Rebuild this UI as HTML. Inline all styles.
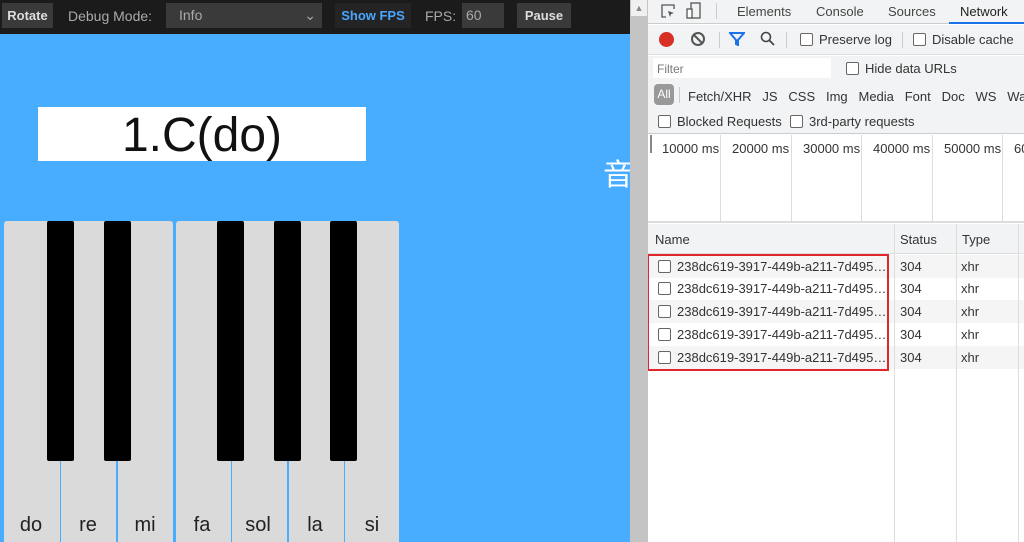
<!DOCTYPE html>
<html><head><meta charset="utf-8"><style>
*{box-sizing:border-box;margin:0;padding:0}
html,body{width:1024px;height:542px;overflow:hidden}
body{position:relative;font-family:"Liberation Sans",sans-serif;background:#fff}
.abs{position:absolute}
#page{left:0;top:0;width:630px;height:542px;background:#49adff;overflow:hidden}
#bar{left:0;top:0;width:630px;height:34px;background:#1b1b1b;color:#aaa;font-size:14px}
.btn{position:absolute;top:3px;height:25px;background:#3a3a3a;color:#ddd;font-weight:bold;font-size:13px;line-height:25px;text-align:center}
.wk{position:absolute;top:221px;height:321px;background:#dadada;border-radius:3px 3px 0 0}
.bk{position:absolute;top:221px;width:27px;height:240px;background:#000;border-radius:2px}
.lbl{position:absolute;top:514px;font-size:20px;color:#222;width:56px;text-align:center}
#dev{left:648px;top:0;width:376px;height:542px;background:#fff;font-family:"Liberation Sans",sans-serif;font-size:13px;color:#333;overflow:hidden}
.cb{display:inline-block;width:13px;height:13px;border:1px solid #666;border-radius:2px;vertical-align:-2px;margin-right:6px;background:#fff}
.row{position:absolute;left:0;width:376px;height:23px;line-height:23px;white-space:nowrap}
</style></head><body>
<div id="page" class="abs">
<div id="bar" class="abs">
 <div class="btn" style="left:2px;width:51px">Rotate</div>
 <span class="abs" style="left:68px;top:8px">Debug Mode:</span>
 <div class="abs" style="left:166px;top:3px;width:156px;height:25px;background:#3a3a3a;color:#aaa;line-height:25px;padding-left:13px">Info<span class="abs" style="right:6px;top:0">⌄</span></div>
 <div class="btn" style="left:335px;width:76px;background:#242424;color:#49a6ff">Show FPS</div>
 <span class="abs" style="left:425px;top:8px">FPS:</span>
 <div class="abs" style="left:462px;top:3px;width:42px;height:25px;background:#3a3a3a;color:#aaa;line-height:25px;padding-left:4px">60</div>
 <div class="btn" style="left:517px;width:54px">Pause</div>
</div>
<div class="abs" style="left:38px;top:107px;width:328px;height:54px;background:#fff;font-size:48px;text-align:center;line-height:58px;color:#111">1.C(do)</div>
<div class="abs" style="left:603px;top:150px;color:#fff;font-size:30px;font-family:'Noto Sans CJK SC',sans-serif">音</div>
<div class="wk" style="left:4px;width:56px"></div>
<div class="wk" style="left:61px;width:55px"></div>
<div class="wk" style="left:118px;width:55px"></div>
<div class="wk" style="left:176px;width:55px"></div>
<div class="wk" style="left:232px;width:55px"></div>
<div class="wk" style="left:289px;width:55px"></div>
<div class="wk" style="left:345px;width:54px"></div>
<div class="bk" style="left:47px"></div><div class="bk" style="left:104px"></div>
<div class="bk" style="left:217px"></div><div class="bk" style="left:274px"></div><div class="bk" style="left:330px"></div>
<div class="lbl" style="left:3px">do</div><div class="lbl" style="left:60px">re</div><div class="lbl" style="left:117px">mi</div>
<div class="lbl" style="left:174px">fa</div><div class="lbl" style="left:230px">sol</div><div class="lbl" style="left:287px">la</div><div class="lbl" style="left:344px">si</div>
</div>
<div class="abs" style="left:630px;top:0;width:18px;height:542px;background:#c4c4c4"></div>
<div class="abs" style="left:631px;top:0;width:16px;height:16px;background:#f0f0f0;color:#888;font-size:9px;text-align:center;line-height:16px">▲</div>
<div id="dev" class="abs">
 <div class="abs" style="left:0;top:0;width:376px;height:24px;background:#f1f3f4;border-bottom:1px solid #ccc"></div>
 <svg class="abs" style="left:12px;top:3px" width="16" height="16"><path d="M6 14H2V2H14V6" fill="none" stroke="#555" stroke-width="1.3"/><path d="M8 8L14 10L11 11L10 14Z" fill="#555"/></svg>
 <svg class="abs" style="left:38px;top:2px" width="16" height="18"><rect x="5" y="1" width="9" height="15" fill="none" stroke="#555" stroke-width="1.3"/><rect x="1" y="7" width="5" height="9" fill="#fff" stroke="#555" stroke-width="1.3"/></svg>
 <div class="abs" style="left:68px;top:3px;width:1px;height:16px;background:#ccc"></div>
 <span class="abs" style="left:89px;top:4px;color:#444">Elements</span>
 <span class="abs" style="left:168px;top:4px;color:#444">Console</span>
 <span class="abs" style="left:240px;top:4px;color:#444">Sources</span>
 <span class="abs" style="left:312px;top:4px;color:#222">Network</span>
 <div class="abs" style="left:301px;top:22px;width:75px;height:2px;background:#1a73e8"></div>
 <div class="abs" style="left:0;top:25px;width:376px;height:30px;background:#f1f3f4;border-bottom:1px solid #ddd"></div>
 <div class="abs" style="left:11px;top:32px;width:15px;height:15px;border-radius:50%;background:#d93025"></div>
 <svg class="abs" style="left:42px;top:31px" width="16" height="16"><circle cx="8" cy="8" r="6" fill="none" stroke="#555" stroke-width="2"/><path d="M4 4L12 12" stroke="#555" stroke-width="2"/></svg>
 <div class="abs" style="left:71px;top:32px;width:1px;height:16px;background:#ccc"></div>
 <svg class="abs" style="left:81px;top:32px" width="16" height="14"><path d="M1 1H15L9 8V13L7 12V8Z" fill="none" stroke="#1a73e8" stroke-width="2"/></svg>
 <svg class="abs" style="left:112px;top:31px" width="16" height="16"><circle cx="6" cy="6" r="4.5" fill="none" stroke="#444" stroke-width="1.6"/><path d="M9.5 9.5L14 14" stroke="#444" stroke-width="1.8"/></svg>
 <div class="abs" style="left:138px;top:32px;width:1px;height:16px;background:#ccc"></div>
 <span class="abs" style="left:152px;top:32px"><span class="cb"></span>Preserve log</span>
 <div class="abs" style="left:254px;top:32px;width:1px;height:16px;background:#ccc"></div>
 <span class="abs" style="left:265px;top:32px;white-space:nowrap"><span class="cb"></span>Disable cache</span>
 <div class="abs" style="left:0;top:56px;width:376px;height:78px;background:#f1f3f4;border-bottom:1px solid #ccc"></div>
 <div class="abs" style="left:5px;top:58px;width:178px;height:20px;background:#fff;color:#777;padding:4px 4px;font-size:12px">Filter</div>
 <span class="abs" style="left:198px;top:61px"><span class="cb"></span>Hide data URLs</span>
 <div class="abs" style="left:6px;top:84px;width:20px;height:21px;background:#999;border-radius:4px;color:#fff;font-size:12px;text-align:center;line-height:21px">All</div>
 <div class="abs" style="left:31px;top:87px;width:1px;height:16px;background:#ccc"></div>
 <span class="abs" style="left:40px;top:89px;white-space:nowrap">Fetch/XHR&nbsp;&nbsp; JS&nbsp;&nbsp; CSS&nbsp;&nbsp; Img&nbsp;&nbsp; Media&nbsp;&nbsp; Font&nbsp;&nbsp; Doc&nbsp;&nbsp; WS&nbsp;&nbsp; Wasm</span>
 <span class="abs" style="left:10px;top:114px"><span class="cb"></span>Blocked Requests</span>
 <span class="abs" style="left:142px;top:114px;white-space:nowrap"><span class="cb"></span>3rd-party requests</span>
 <div class="abs" style="left:0;top:135px;width:376px;height:88px;border-bottom:2px solid #ddd"></div>
 <div class="abs" style="left:2px;top:135px;width:2px;height:18px;background:#888"></div>
 <span class="abs" style="left:14px;top:141px">10000 ms</span><span class="abs" style="left:84px;top:141px">20000 ms</span>
 <span class="abs" style="left:155px;top:141px">30000 ms</span><span class="abs" style="left:225px;top:141px">40000 ms</span>
 <span class="abs" style="left:296px;top:141px">50000 ms</span><span class="abs" style="left:366px;top:141px">60</span>
 <div class="abs" style="left:72px;top:135px;width:1px;height:87px;background:#ddd"></div>
 <div class="abs" style="left:143px;top:135px;width:1px;height:87px;background:#ddd"></div>
 <div class="abs" style="left:213px;top:135px;width:1px;height:87px;background:#ddd"></div>
 <div class="abs" style="left:284px;top:135px;width:1px;height:87px;background:#ddd"></div>
 <div class="abs" style="left:354px;top:135px;width:1px;height:87px;background:#ddd"></div>
 <div class="abs" style="left:0;top:224px;width:376px;height:30px;background:#f1f3f4;border-bottom:1px solid #ddd"></div>
 <span class="abs" style="left:7px;top:232px">Name</span><span class="abs" style="left:252px;top:232px">Status</span><span class="abs" style="left:314px;top:232px">Type</span>
 <div class="row" style="top:255px;background:#f5f5f5"><span class="abs" style="left:10px"><span class="cb"></span>238dc619-3917-449b-a211-7d495…</span><span class="abs" style="left:252px">304</span><span class="abs" style="left:313px">xhr</span></div>
 <div class="row" style="top:277px"><span class="abs" style="left:10px"><span class="cb"></span>238dc619-3917-449b-a211-7d495…</span><span class="abs" style="left:252px">304</span><span class="abs" style="left:313px">xhr</span></div>
 <div class="row" style="top:300px;background:#f5f5f5"><span class="abs" style="left:10px"><span class="cb"></span>238dc619-3917-449b-a211-7d495…</span><span class="abs" style="left:252px">304</span><span class="abs" style="left:313px">xhr</span></div>
 <div class="row" style="top:323px"><span class="abs" style="left:10px"><span class="cb"></span>238dc619-3917-449b-a211-7d495…</span><span class="abs" style="left:252px">304</span><span class="abs" style="left:313px">xhr</span></div>
 <div class="row" style="top:346px;background:#f5f5f5"><span class="abs" style="left:10px"><span class="cb"></span>238dc619-3917-449b-a211-7d495…</span><span class="abs" style="left:252px">304</span><span class="abs" style="left:313px">xhr</span></div>
 <div class="abs" style="left:246px;top:224px;width:1px;height:318px;background:#ddd"></div>
 <div class="abs" style="left:308px;top:224px;width:1px;height:318px;background:#ddd"></div>
 <div class="abs" style="left:370px;top:224px;width:1px;height:318px;background:#ddd"></div>
 <div class="abs" style="left:-1px;top:254px;width:242px;height:117px;border:2px solid #e0262c"></div>
</div>
</body></html>
